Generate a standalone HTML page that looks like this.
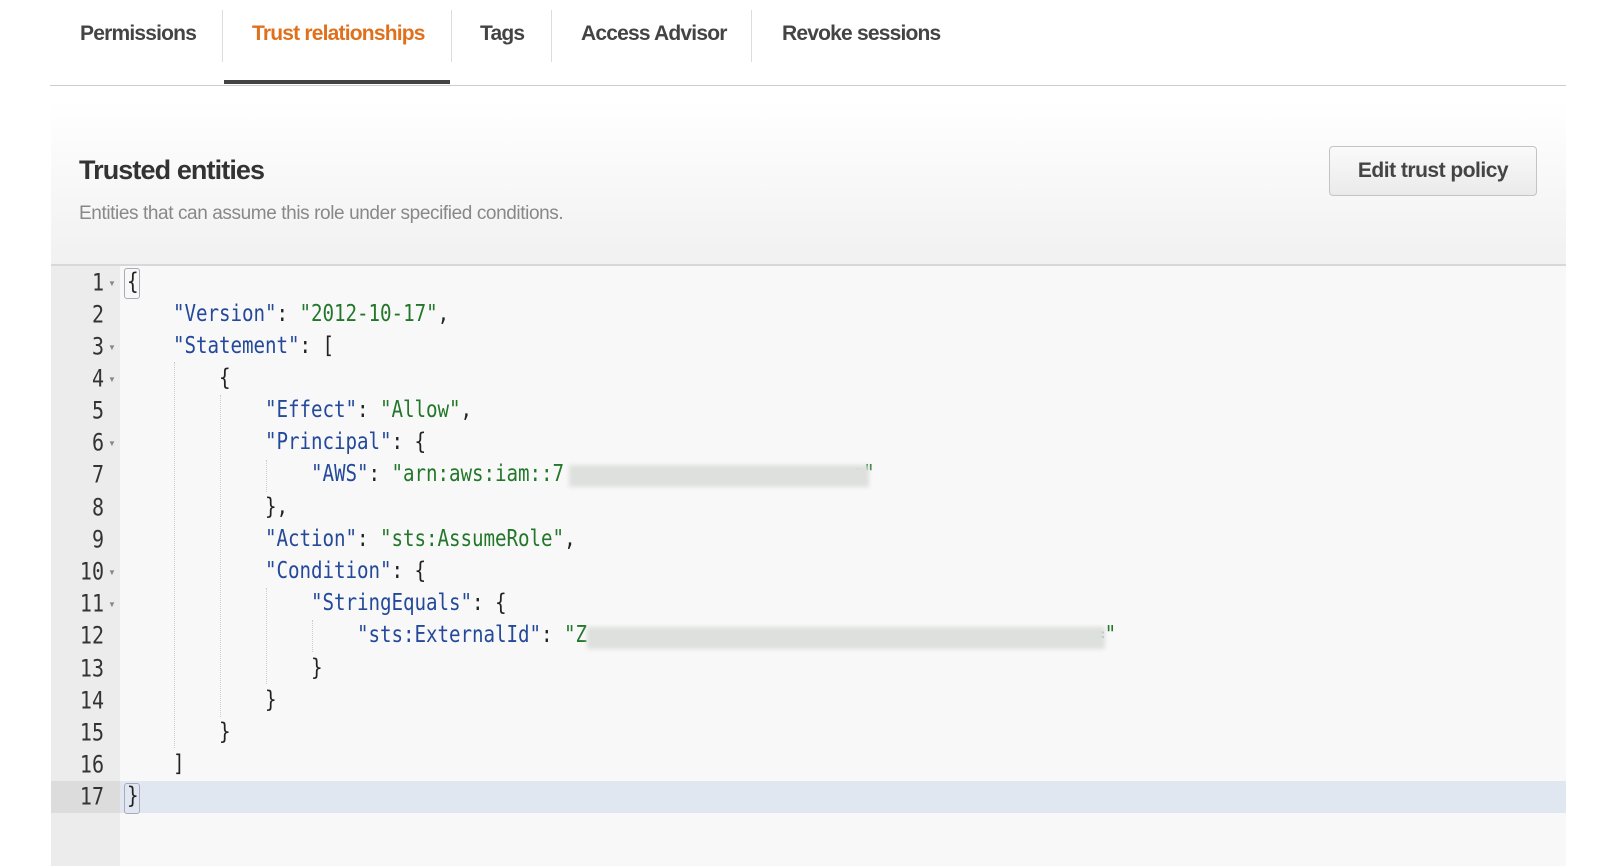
<!DOCTYPE html>
<html><head><meta charset="utf-8"><style>
html,body{margin:0;padding:0;width:1600px;height:866px;overflow:hidden;background:#fff;font-family:"Liberation Sans",sans-serif;}
.tab{position:absolute;top:22px;font-size:21px;font-weight:bold;color:#444;letter-spacing:-0.8px}
.sep{position:absolute;top:10px;width:1px;height:52px;background:#ddd}
.code{position:absolute;font-family:"DejaVu Sans Mono","Liberation Mono",monospace;font-size:19.2px;line-height:32px;white-space:pre;color:#222;letter-spacing:-0.05px;transform:scaleY(1.18);transform-origin:0 50%}
.k{color:#24499b}.s{color:#23772a}
.num{position:absolute;font-family:"DejaVu Sans Mono","Liberation Mono",monospace;font-size:20px;line-height:32px;color:#333;width:50px;text-align:right;left:54px;transform:scaleY(1.18)}
.arr{position:absolute;left:108px;font-size:8px;color:#888}
.guide{position:absolute;width:0;border-left:1px dotted #ccc}
.red{position:absolute;height:22px;background:#dde0dc;filter:blur(2px)}
</style></head><body>
<div class="tab" style="left:80px">Permissions</div>
<div class="sep" style="left:222px"></div>
<div class="tab" style="left:252px;color:#e0701c">Trust relationships</div>
<div class="sep" style="left:451px"></div>
<div class="tab" style="left:480px">Tags</div>
<div class="sep" style="left:551px"></div>
<div class="tab" style="left:581px">Access Advisor</div>
<div class="sep" style="left:751px"></div>
<div class="tab" style="left:782px">Revoke sessions</div>
<div style="position:absolute;left:224px;top:80px;width:226px;height:4px;background:#444"></div>
<div style="position:absolute;left:50px;top:85px;width:1516px;height:1px;background:#ccc"></div>

<div style="position:absolute;left:51px;top:100px;width:1515px;height:165px;background:linear-gradient(#fff,#f1f1f1)"></div>
<div style="position:absolute;left:79px;top:155px;font-size:27px;font-weight:bold;color:#333;letter-spacing:-0.9px">Trusted entities</div>
<div style="position:absolute;left:79px;top:203px;font-size:19px;color:#888;letter-spacing:-0.4px">Entities that can assume this role under specified conditions.</div>
<div style="position:absolute;left:1329px;top:146px;width:208px;height:50px;border:1px solid #c4c4c4;border-radius:4px;background:linear-gradient(#fafafa,#eaeaea);box-sizing:border-box;text-align:center;line-height:48px;font-size:21px;font-weight:bold;color:#444;letter-spacing:-0.5px">Edit trust policy</div>
<div style="position:absolute;left:51px;top:264px;width:1515px;height:2px;background:#d8d8d8"></div>

<div style="position:absolute;left:51px;top:266px;width:1515px;height:600px;background:#f8f8f8"></div>
<div style="position:absolute;left:51px;top:266px;width:69px;height:600px;background:#ececec"></div>
<div style="position:absolute;left:51px;top:781px;width:69px;height:32px;background:#dcdcdc"></div>
<div style="position:absolute;left:120px;top:781px;width:1446px;height:32px;background:#e1e7f0"></div>
<div style="position:absolute;left:124px;top:268px;width:14px;height:29px;border:1px solid #aab;border-radius:3px"></div>
<div style="position:absolute;left:124px;top:783px;width:14px;height:29px;border:1px solid #aab;border-radius:3px"></div>

<div class="guide" style="left:174px;top:362px;height:386px"></div>
<div class="guide" style="left:220px;top:395px;height:322px"></div>
<div class="guide" style="left:266px;top:460px;height:32px"></div>
<div class="guide" style="left:266px;top:588px;height:96px"></div>
<div class="guide" style="left:312px;top:620px;height:32px"></div>

<div class="num" style="top:266px">1</div><div class="arr" style="top:279px">▼</div>
<div class="num" style="top:298px">2</div>
<div class="num" style="top:330px">3</div><div class="arr" style="top:343px">▼</div>
<div class="num" style="top:362px">4</div><div class="arr" style="top:375px">▼</div>
<div class="num" style="top:394px">5</div>
<div class="num" style="top:426px">6</div><div class="arr" style="top:439px">▼</div>
<div class="num" style="top:458px">7</div>
<div class="num" style="top:491px">8</div>
<div class="num" style="top:523px">9</div>
<div class="num" style="top:555px">10</div><div class="arr" style="top:568px">▼</div>
<div class="num" style="top:587px">11</div><div class="arr" style="top:600px">▼</div>
<div class="num" style="top:619px">12</div>
<div class="num" style="top:652px">13</div>
<div class="num" style="top:684px">14</div>
<div class="num" style="top:716px">15</div>
<div class="num" style="top:748px">16</div>
<div class="num" style="top:780px">17</div>

<div class="code" style="left:127px;top:266px">{</div>
<div class="code" style="left:173px;top:298px"><span class="k">"Version"</span>: <span class="s">"2012-10-17"</span>,</div>
<div class="code" style="left:173px;top:330px"><span class="k">"Statement"</span>: [</div>
<div class="code" style="left:219px;top:362px">{</div>
<div class="code" style="left:265px;top:394px"><span class="k">"Effect"</span>: <span class="s">"Allow"</span>,</div>
<div class="code" style="left:265px;top:426px"><span class="k">"Principal"</span>: {</div>
<div class="code" style="left:311px;top:458px"><span class="k">"AWS"</span>: <span class="s">"arn:aws:iam::7                         s"</span></div>
<div class="code" style="left:265px;top:491px">},</div>
<div class="code" style="left:265px;top:523px"><span class="k">"Action"</span>: <span class="s">"sts:AssumeRole"</span>,</div>
<div class="code" style="left:265px;top:555px"><span class="k">"Condition"</span>: {</div>
<div class="code" style="left:311px;top:587px"><span class="k">"StringEquals"</span>: {</div>
<div class="code" style="left:357px;top:619px"><span class="k">"sts:ExternalId"</span>: <span class="s">"Z                                            ="</span></div>
<div class="code" style="left:311px;top:652px">}</div>
<div class="code" style="left:265px;top:684px">}</div>
<div class="code" style="left:219px;top:716px">}</div>
<div class="code" style="left:173px;top:748px">]</div>
<div class="code" style="left:127px;top:780px">}</div>

<div class="red" style="left:569px;top:465px;width:300px"></div>
<div class="red" style="left:587px;top:627px;width:518px"></div>
</body></html>
